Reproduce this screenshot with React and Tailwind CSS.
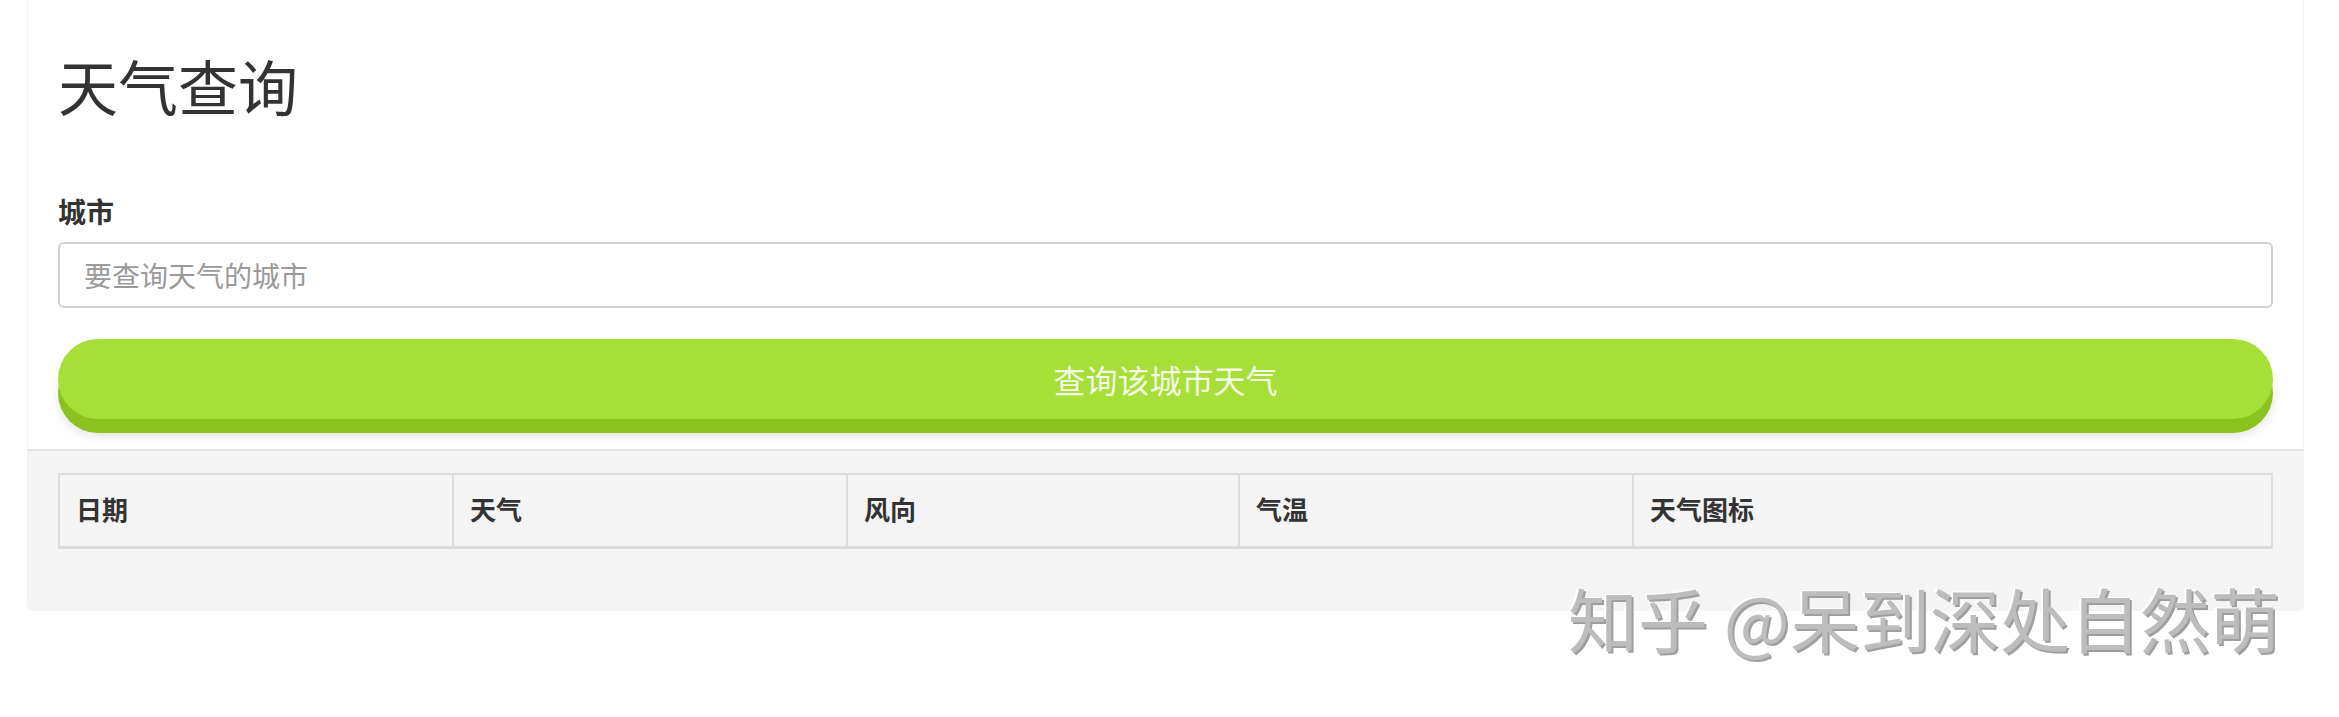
import React from "react";

const font = { fontFamily: '"Noto Sans CJK SC", "Noto Sans", sans-serif' };

const columns = [
  { label: "日期", w: "w-[392px]" },
  { label: "天气", w: "w-[394px]" },
  { label: "风向", w: "w-[392px]" },
  { label: "气温", w: "w-[394px]" },
  { label: "天气图标", w: "flex-1" },
];

export default function App() {
  return (
    <div className="relative min-h-[717px] bg-white text-[#333]" style={font}>
      <div className="ml-[27px] w-[2277px] border-x border-[#f3f3f3] rounded-b-md">
        {/* search form */}
        <div className="px-[30px] pt-[52px] pb-[30px]">
          <h1 className="text-[60px] leading-[66px] font-normal">天气查询</h1>
          <label className="block mt-[76px] text-[28px] leading-[34px] font-bold">城市</label>
          <input
            type="text"
            placeholder="要查询天气的城市"
            className="mt-[14px] block w-full h-[66px] rounded-md border-2 border-[#d2d2d2] bg-white pl-[24px] text-[28px] outline-none placeholder:text-[#9a9a9a]"
          />
          <button className="mt-[31px] block w-full h-[80px] rounded-[40px] bg-[#a6df37] text-[32px] text-[#f4fbe6] shadow-[0_14px_0_#8bc220,0_18px_10px_rgba(0,0,0,0.1)]">
            查询该城市天气
          </button>
        </div>

        {/* result table */}
        <div className="bg-[#f4f4f4] border-t-2 border-[#e3e3e3] px-[30px] pt-[22px] pb-[62px] rounded-b-md">
          <div className="flex h-[76px] border-x-2 border-t-2 border-b-[3px] border-[#dcdcdc]">
            {columns.map((c, i) => (
              <div
                key={c.label}
                className={`${c.w} flex items-center pl-[16px] pb-[4px] text-[26px] font-bold ${i > 0 ? "border-l-2 border-[#dcdcdc]" : ""}`}
              >
                {c.label}
              </div>
            ))}
          </div>
        </div>
      </div>

      {/* watermark */}
      <div className="absolute left-[1568px] top-[583px] text-[70px] leading-none font-normal text-[#bdbdbd] whitespace-nowrap [text-shadow:2px_2px_0_#9e9e9e,-2px_-1px_0_#ffffff]">
        知乎 @呆到深处自然萌
      </div>
    </div>
  );
}
